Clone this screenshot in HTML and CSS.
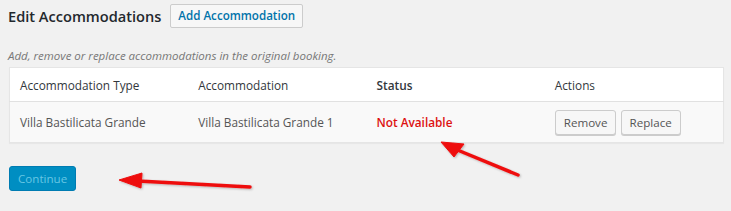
FILE: index.html
```html
<!DOCTYPE html>
<html lang="en">
<head>
    <meta charset="UTF-8">
    <title>Edit Accommodations</title>
    <link rel="stylesheet" href="styles.css">
</head>
<body>
    <div class="wrap">
        <h2 class="title">
            Edit Accommodations
            <a href="#" class="title-action">Add Accommodation</a>
        </h2>
        <p class="description">Add, remove or replace accommodations in the original booking.</p>

        <table class="accommodations">
            <thead>
                <tr>
                    <th>Accommodation Type</th>
                    <th>Accommodation</th>
                    <th class="status-col">Status</th>
                    <th>Actions</th>
                </tr>
            </thead>
            <tbody>
                <tr>
                    <td>Villa Bastilicata Grande</td>
                    <td>Villa Bastilicata Grande 1</td>
                    <td class="not-available">Not Available</td>
                    <td>
                        <button type="button" class="button">Remove</button>
                        <button type="button" class="button">Replace</button>
                    </td>
                </tr>
            </tbody>
        </table>

        <div class="submit">
            <button type="button" class="button-primary" disabled>Continue</button>
        </div>
    </div>

    <!-- annotation arrows drawn over the screenshot -->
    <svg class="arrows" width="731" height="211" viewBox="0 0 731 211">
        <defs>
            <filter id="shade" x="-20%" y="-20%" width="140%" height="140%">
                <feDropShadow dx="1" dy="1" stdDeviation="1" flood-color="#000" flood-opacity="0.25"/>
            </filter>
        </defs>
        <g fill="#ee1111" stroke="#ee1111" filter="url(#shade)">
            <line x1="518" y1="175" x2="455" y2="149" stroke-width="3.5" stroke-linecap="round"/>
            <polygon points="441,142 464,144 454,157" stroke-width="1" stroke-linejoin="round"/>
            <line x1="250" y1="187" x2="138" y2="181" stroke-width="3.5" stroke-linecap="round"/>
            <polygon points="119,180 142,173 141,188" stroke-width="1" stroke-linejoin="round"/>
        </g>
    </svg>
</body>
</html>
```

FILE: styles.css
```css
body {
    margin: 0;
    padding: 0 8px;
    background: #f1f1f1;
    color: #444;
    font-family: "Open Sans", "Liberation Sans", sans-serif;
    font-size: 12px;
}

.wrap {
    padding-top: 4px;
}

.title {
    display: flex;
    align-items: center;
    gap: 9px;
    margin: 0;
    font-size: 14.6px;
    font-weight: 600;
    color: #23282d;
}

.title-action {
    padding: 3px 7px;
    border: 1px solid #ccc;
    border-radius: 2px;
    background: #f7f7f7;
    color: #0073aa;
    font-size: 11.6px;
    font-weight: 600;
    text-decoration: none;
    line-height: 16px;
}

.description {
    margin: 20px 0 4px;
    font-style: italic;
    font-size: 11.5px;
    color: #777;
}

.accommodations {
    width: 715px;
    margin-left: 1px;
    border: 1px solid #e5e5e5;
    border-collapse: collapse;
    box-shadow: 0 1px 1px rgba(0, 0, 0, 0.04);
    background: #fff;
    table-layout: fixed;
}

.accommodations th,
.accommodations td {
    width: 25%;
    padding: 0 10px;
    text-align: left;
    font-size: 11.8px;
    color: #32373c;
}

.accommodations th {
    height: 33px;
    font-weight: 400;
    border-bottom: 1px solid #e1e1e1;
}

.accommodations th.status-col {
    font-weight: 600;
}

.accommodations td {
    height: 40px;
    background: #f9f9f9;
    color: #555;
}

.accommodations td.not-available {
    color: #dd1111;
    font-weight: 600;
}

.button {
    height: 25px;
    margin-right: 1px;
    padding: 0 8px;
    border: 1px solid #ccc;
    border-radius: 3px;
    background: #f7f7f7;
    box-shadow: 0 1px 0 #ccc;
    color: #555;
    font-family: inherit;
    font-size: 11.6px;
    cursor: pointer;
}

.submit {
    padding-top: 23px;
    padding-left: 1px;
}

.button-primary {
    height: 25px;
    padding: 0 8px;
    border: 1px solid #007cb2;
    border-radius: 3px;
    background: #008ec2;
    color: #66c6e4;
    font-family: inherit;
    font-size: 11.6px;
}

.arrows {
    position: absolute;
    top: 0;
    left: 0;
    pointer-events: none;
}
```
